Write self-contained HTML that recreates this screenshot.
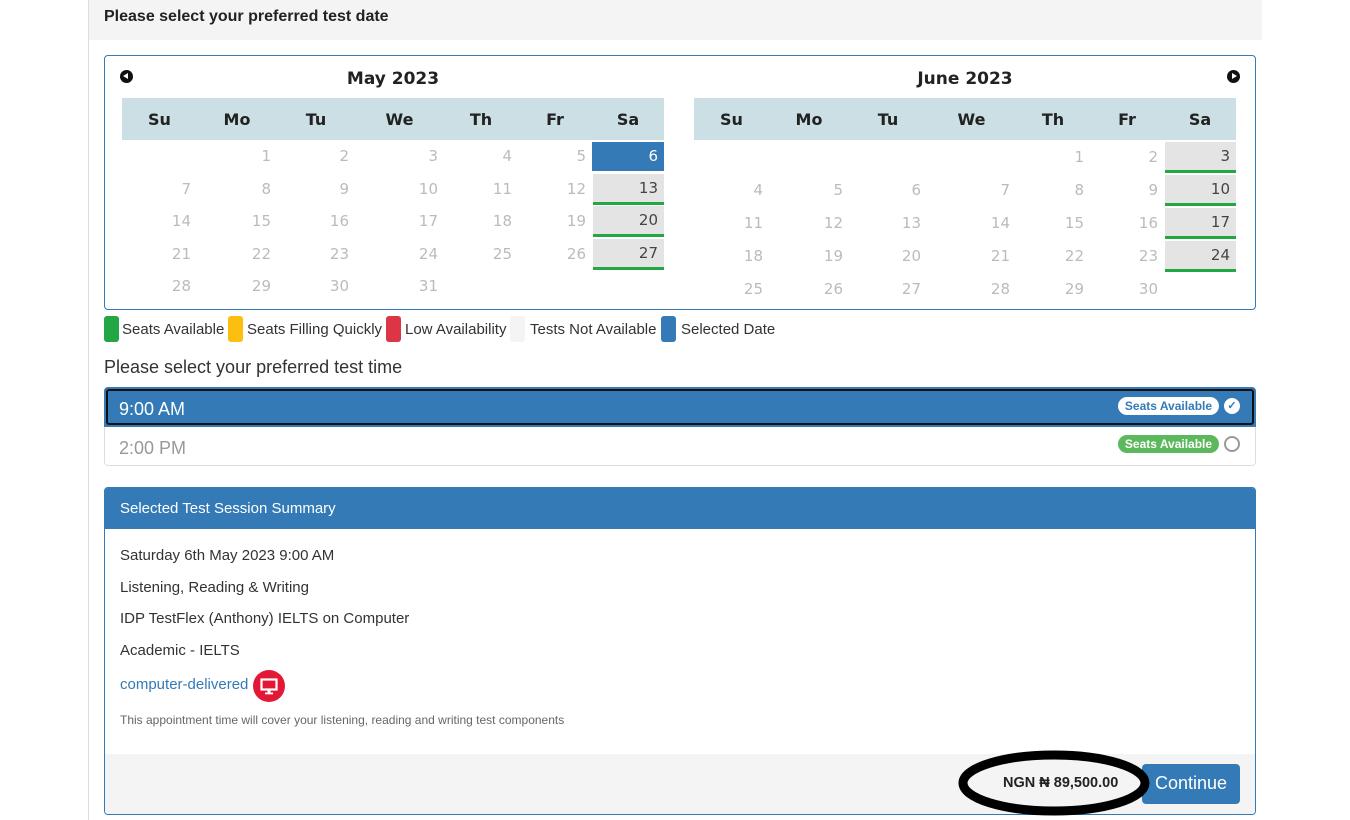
<!DOCTYPE html>
<html><head><meta charset="utf-8"><style>
*{box-sizing:border-box;margin:0;padding:0}
body{width:1350px;height:820px;background:#fff;position:relative;overflow:hidden;font-family:"Liberation Sans",Arial,sans-serif;color:#333}
.abs{position:absolute}
.cal{font-family:"DejaVu Sans",Verdana,sans-serif}
table{border-collapse:collapse;table-layout:fixed;position:absolute}
th{background:#cbdfe5;height:42px;font-size:16px;font-weight:bold;color:#222;text-align:center}
td{font-size:15px;color:#bbb;text-align:right;padding:0;position:relative}
td span{display:block;padding-right:6px}
td.av span{background:#e4e4e4;color:#444;margin:1px 0 0 1px;border-bottom:3px solid #22a744;height:31px;line-height:29px}
td.sel span{background:#337ab7;color:#fff;height:29px;line-height:29px;margin:1px 0 0 0}
.leg{position:absolute;top:316px;height:26px;font-size:15px;line-height:26px;color:#333}
.sw{position:absolute;top:316px;width:15px;height:26px;border-radius:3px}
</style></head><body>
<div class="abs" style="left:88px;top:0;width:1px;height:820px;background:#ddd"></div>
<div class="abs" style="left:89px;top:0;width:1173px;height:40px;background:#f4f4f4"></div>
<div class="abs" style="left:104px;top:8px;font-size:16px;font-weight:bold;color:#222">Please select your preferred test date</div>

<div class="abs" style="left:104px;top:55px;width:1152px;height:255px;border:1px solid #337ab7;border-radius:4px"></div>
<div class="abs" style="left:120px;top:70px;width:13px;height:13px;border-radius:50%;background:#111"><div style="position:absolute;left:3px;top:3px;border-right:5px solid #fff;border-top:3.5px solid transparent;border-bottom:3.5px solid transparent"></div></div>
<div class="abs" style="left:1227px;top:70px;width:13px;height:13px;border-radius:50%;background:#111"><div style="position:absolute;left:5px;top:3px;border-left:5px solid #fff;border-top:3.5px solid transparent;border-bottom:3.5px solid transparent"></div></div>
<div class="abs cal" style="left:122px;top:69px;width:542px;text-align:center;font-size:17px;font-weight:bold;color:#222">May 2023</div>
<div class="abs cal" style="left:694px;top:69px;width:542px;text-align:center;font-size:17px;font-weight:bold;color:#222">June 2023</div>

<table class="cal" style="left:122px;top:98px;width:542px">
<colgroup><col style="width:75px"><col style="width:80px"><col style="width:78px"><col style="width:89px"><col style="width:74px"><col style="width:74px"><col style="width:72px"></colgroup>
<tr><th>Su</th><th>Mo</th><th>Tu</th><th>We</th><th>Th</th><th>Fr</th><th>Sa</th></tr>
<tr style="height:32.5px"><td></td><td><span>1</span></td><td><span>2</span></td><td><span>3</span></td><td><span>4</span></td><td><span>5</span></td><td class="sel"><span>6</span></td></tr>
<tr style="height:32.5px"><td><span>7</span></td><td><span>8</span></td><td><span>9</span></td><td><span>10</span></td><td><span>11</span></td><td><span>12</span></td><td class="av"><span>13</span></td></tr>
<tr style="height:32.5px"><td><span>14</span></td><td><span>15</span></td><td><span>16</span></td><td><span>17</span></td><td><span>18</span></td><td><span>19</span></td><td class="av"><span>20</span></td></tr>
<tr style="height:32.5px"><td><span>21</span></td><td><span>22</span></td><td><span>23</span></td><td><span>24</span></td><td><span>25</span></td><td><span>26</span></td><td class="av"><span>27</span></td></tr>
<tr style="height:32.5px"><td><span>28</span></td><td><span>29</span></td><td><span>30</span></td><td><span>31</span></td><td></td><td></td><td></td></tr>
</table>

<table class="cal" style="left:694px;top:98px;width:542px">
<colgroup><col style="width:75px"><col style="width:80px"><col style="width:78px"><col style="width:89px"><col style="width:74px"><col style="width:74px"><col style="width:72px"></colgroup>
<tr><th>Su</th><th>Mo</th><th>Tu</th><th>We</th><th>Th</th><th>Fr</th><th>Sa</th></tr>
<tr style="height:33px"><td></td><td></td><td></td><td></td><td><span>1</span></td><td><span>2</span></td><td class="av"><span>3</span></td></tr>
<tr style="height:33px"><td><span>4</span></td><td><span>5</span></td><td><span>6</span></td><td><span>7</span></td><td><span>8</span></td><td><span>9</span></td><td class="av"><span>10</span></td></tr>
<tr style="height:33px"><td><span>11</span></td><td><span>12</span></td><td><span>13</span></td><td><span>14</span></td><td><span>15</span></td><td><span>16</span></td><td class="av"><span>17</span></td></tr>
<tr style="height:33px"><td><span>18</span></td><td><span>19</span></td><td><span>20</span></td><td><span>21</span></td><td><span>22</span></td><td><span>23</span></td><td class="av"><span>24</span></td></tr>
<tr style="height:33px"><td><span>25</span></td><td><span>26</span></td><td><span>27</span></td><td><span>28</span></td><td><span>29</span></td><td><span>30</span></td><td></td></tr>
</table>

<div class="sw" style="left:104px;background:#22a744"></div><div class="leg" style="left:122px;top:317px">Seats Available</div>
<div class="sw" style="left:228px;background:#fdbf0f"></div><div class="leg" style="left:247px;top:317px">Seats Filling Quickly</div>
<div class="sw" style="left:386px;background:#dc3545"></div><div class="leg" style="left:405px;top:317px">Low Availability</div>
<div class="sw" style="left:510px;background:#f4f4f4"></div><div class="leg" style="left:530px;top:317px">Tests Not Available</div>
<div class="sw" style="left:661px;background:#337ab7"></div><div class="leg" style="left:681px;top:317px">Selected Date</div>

<div class="abs" style="left:104px;top:357px;font-size:18px;color:#333">Please select your preferred test time</div>

<div class="abs" style="left:104px;top:387px;width:1152px;height:40px;border:1px solid #337ab7;border-radius:4px 4px 0 0;background:#337ab7">
 <div style="position:absolute;left:1px;top:1px;right:1px;bottom:1px;border:2px solid #111;border-radius:3px"></div>
 <div style="position:absolute;left:14px;top:11px;font-size:18px;color:#fff">9:00 AM</div>
 <div style="position:absolute;left:1013px;top:9px;width:101px;height:18px;border-radius:9px;background:#fff;color:#337ab7;font-size:12px;font-weight:bold;text-align:center;line-height:18px">Seats Available</div>
 <div style="position:absolute;left:1119px;top:10px;width:16px;height:16px;border-radius:50%;background:#fff;color:#337ab7;font-size:11px;font-weight:bold;text-align:center;line-height:16px">✓</div>
</div>
<div class="abs" style="left:104px;top:427px;width:1152px;height:39px;border:1px solid #ddd;border-top:none;border-radius:0 0 4px 4px">
 <div style="position:absolute;left:14px;top:11px;font-size:18px;color:#999">2:00 PM</div>
 <div style="position:absolute;left:1013px;top:8px;width:101px;height:18px;border-radius:9px;background:#5cb85c;color:#fff;font-size:12px;font-weight:bold;text-align:center;line-height:18px">Seats Available</div>
 <div style="position:absolute;left:1119px;top:9px;width:16px;height:16px;border-radius:50%;border:2px solid #999"></div>
</div>

<div class="abs" style="left:104px;top:487px;width:1152px;height:328px;border:1px solid #337ab7;border-radius:4px;overflow:hidden">
 <div style="height:41px;background:#337ab7;color:#fff;font-size:15px;padding:12px 0 0 15px">Selected Test Session Summary</div>
 <div style="position:absolute;left:15px;top:52px;font-size:15px;color:#333;line-height:31.5px">Saturday 6th May 2023 9:00 AM<br>Listening, Reading &amp; Writing<br>IDP TestFlex (Anthony) IELTS on Computer<br>Academic - IELTS</div>
 <div style="position:absolute;left:15px;top:188px;font-size:15px;color:#337ab7">computer-delivered</div>
 <div style="position:absolute;left:148px;top:182px;width:32px;height:32px;border-radius:50%;background:#e31837">
  <svg width="32" height="32" viewBox="0 0 32 32"><rect x="8.5" y="9.5" width="15" height="10" fill="none" stroke="#fff" stroke-width="2.2"/><rect x="14.5" y="20" width="3" height="3" fill="#fff"/><rect x="12" y="22.5" width="8" height="1.8" fill="#fff"/></svg>
 </div>
 <div style="position:absolute;left:15px;top:225px;font-size:12px;color:#666">This appointment time will cover your listening, reading and writing test components</div>
 <div style="position:absolute;left:0;top:266px;width:100%;height:62px;background:#f4f4f4"></div>
 <div style="position:absolute;left:1037px;top:276px;width:98px;height:40px;background:#337ab7;border-radius:4px;color:#fff;font-size:18px;text-align:center;line-height:38px">Continue</div>
 <div style="position:absolute;left:898px;top:287px;font-size:14.5px;font-weight:bold;color:#222">NGN ₦ 89,500.00</div>
</div>
<svg class="abs" style="left:950px;top:745px" width="210" height="75"><ellipse cx="104" cy="38" rx="91" ry="28" fill="none" stroke="#000" stroke-width="9"/></svg>
</body></html>
